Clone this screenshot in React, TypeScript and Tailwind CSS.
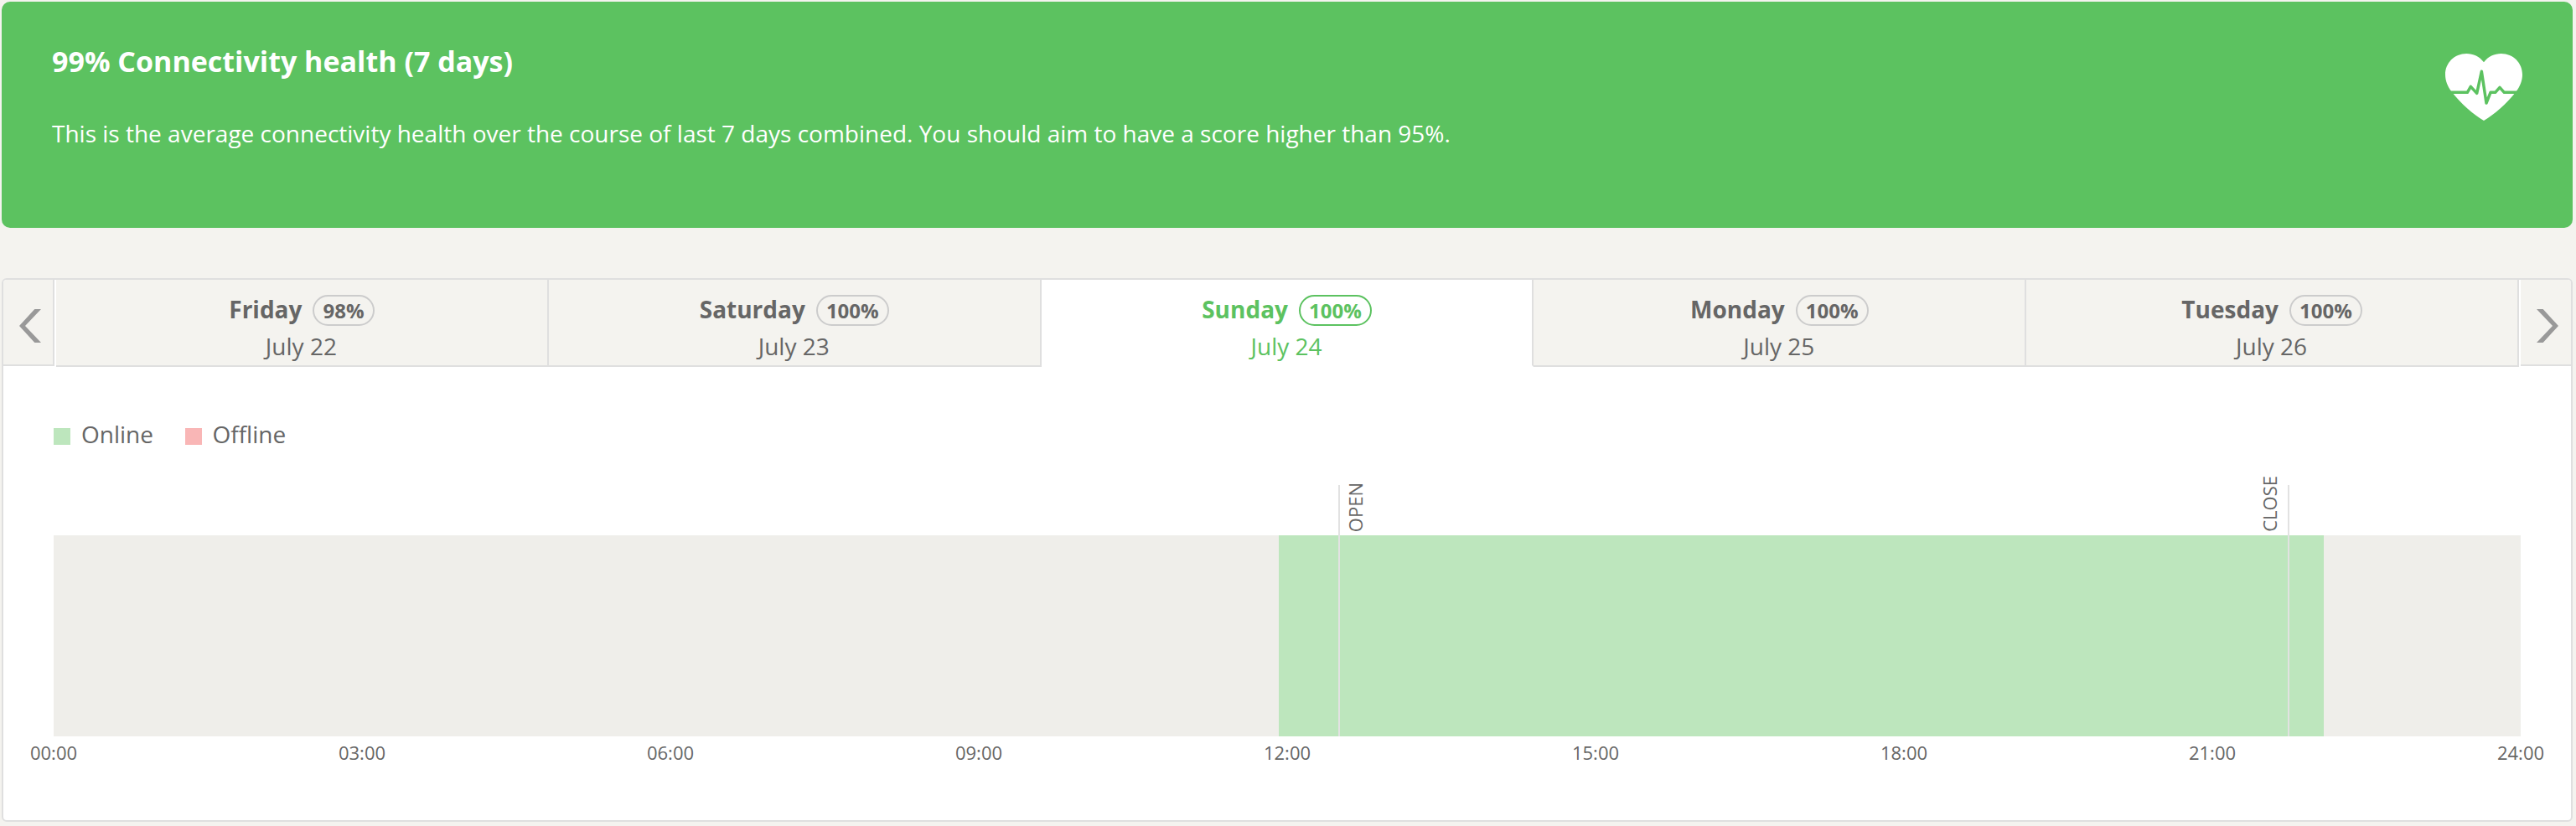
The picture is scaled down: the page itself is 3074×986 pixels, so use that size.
interface Day {
  name: string;
  date: string;
  score: string;
}

const days: Day[] = [
  { name: "Friday", date: "July 22", score: "98%" },
  { name: "Saturday", date: "July 23", score: "100%" },
  { name: "Sunday", date: "July 24", score: "100%" },
  { name: "Monday", date: "July 25", score: "100%" },
  { name: "Tuesday", date: "July 26", score: "100%" },
];

const hours = ["00:00", "03:00", "06:00", "09:00", "12:00", "15:00", "18:00", "21:00", "24:00"];

function HeartPulse() {
  return (
    <svg viewBox="132 102 276 240" className="mt-[62px] h-20 w-[92px]" fill="none">
      <path
        d="M270 133C255 112 232 102 208 102C164 102 132 136 132 177C132 200 141 220 154 238C190 284 232 320 270 342C308 320 350 284 386 238C399 220 408 200 408 177C408 136 376 102 332 102C308 102 285 112 270 133Z"
        fill="#fff"
      />
      <path
        d="M140 241H211L223 220L245 244L262 166L279 279L294 241H311L327 223L343 241H400"
        stroke="#5cc260"
        strokeWidth="10.5"
        strokeLinejoin="round"
      />
    </svg>
  );
}

function Chevron({ flip = false }: { flip?: boolean }) {
  return (
    <svg viewBox="0 0 78 120" className={`h-10 w-[26px] ${flip ? "-scale-x-100" : ""}`}>
      <path d="M0 60L55 0H78L21 60L78 120H55Z" fill="#999" />
    </svg>
  );
}

function DayTab({ day, active }: { day: Day; active: boolean }) {
  return (
    <button
      className={`flex h-[104px] flex-1 flex-col items-center border-r-2 border-b-2 border-r-[#dfdfdf] pt-[13px] text-[28px] leading-[44px] ${
        active ? "border-b-white bg-white text-[#5cc260]" : "border-b-[#dfdfdf] bg-[#f4f3ef] text-[#666]"
      }`}
    >
      <span className="flex h-11 items-start gap-[13px]">
        <span className="font-bold">{day.name}</span>
        <span
          className={`mt-[5px] h-[37px] rounded-full border-2 px-2.5 text-[24px] leading-[33px] font-bold ${
            active ? "border-[#5cc260]" : "border-[#ccc]"
          }`}
        >
          {day.score}
        </span>
      </span>
      <span className="pr-px">{day.date}</span>
    </button>
  );
}

export default function App() {
  return (
    <div className="h-[986px] w-[3074px] bg-[#f4f3ef] px-0.5 pt-0.5 pr-1 font-['Open_Sans',sans-serif] text-[#666]">
      {/* Summary banner */}
      <section className="flex h-[270px] items-start justify-between rounded-[10px] bg-[#5cc260] px-[60px] text-white">
        <div className="pt-[46px]">
          <h1 className="text-[34px] leading-[50px] font-bold">99% Connectivity health (7 days)</h1>
          <p className="mt-[39px] text-[28px] leading-[44px]">
            This is the average connectivity health over the course of last 7 days combined. You should aim to have a
            score higher than 95%.
          </p>
        </div>
        <HeartPulse />
      </section>

      <section className="mt-[60px] h-[649px] overflow-hidden rounded-[6px] border-2 border-[#dfdfdf] bg-white">
        {/* Day picker */}
        <div className="flex items-start">
          <button className="mr-0.5 h-[103px] w-[61px] border-r-2 border-b-2 border-[#dfdfdf] bg-[#f4f3ef] pt-2 pl-[19px]">
            <Chevron />
          </button>
          <div className="flex flex-1">
            {days.map((day) => (
              <DayTab key={day.name} day={day} active={day.name === "Sunday"} />
            ))}
          </div>
          <button className="ml-0.5 h-[103px] w-[60px] border-b-2 border-[#dfdfdf] bg-[#f4f3ef] pt-2 pl-[19px]">
            <Chevron flip />
          </button>
        </div>

        <div className="px-[60px]">
          {/* Legend */}
          <div className="mt-[58px] flex h-11 items-center text-[28px] leading-[44px]">
            <span className="mt-[6px] mr-[13px] size-5 bg-[#bde6bd]" />
            <span>Online</span>
            <span className="mt-[6px] mr-[12.5px] ml-[38px] size-5 bg-[#f9b6b6]" />
            <span>Offline</span>
          </div>

          {/* Timeline */}
          <div className="relative mt-[99px] flex h-[240px] bg-[#efeeea]">
            <div className="ml-[1462px] w-[1247px] bg-[#bde6bd]" />
            <div className="absolute bottom-0 left-[1533px] h-[300px] w-0.5 bg-[#e2e2e2]" />
            <div className="absolute bottom-0 left-[2666px] h-[300px] w-0.5 bg-[#e2e2e2]" />
            <span className="absolute bottom-[244px] left-[1538px] rotate-180 text-[22px] leading-[30px] [writing-mode:vertical-rl]">
              OPEN
            </span>
            <span className="absolute bottom-[244px] left-[2629px] rotate-180 text-[22px] leading-[30px] [writing-mode:vertical-rl]">
              CLOSE
            </span>
          </div>
          <div className="-mx-[50px] mt-1 flex justify-between text-[22px] leading-[30px]">
            {hours.map((hour) => (
              <span key={hour} className="w-[100px] text-center">
                {hour}
              </span>
            ))}
          </div>
        </div>
      </section>
    </div>
  );
}
